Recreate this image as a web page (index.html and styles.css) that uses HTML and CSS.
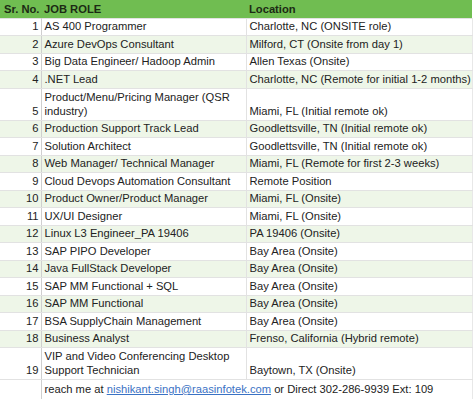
FILE: index.html
```html
<!DOCTYPE html>
<html lang="en">
<head>
  <meta charset="UTF-8" />
  <title>Open Positions</title>
  <link rel="stylesheet" href="styles.css">
</head>
<body>
  <table class="jobs">
    <colgroup>
      <col class="c-no">
      <col class="c-role">
      <col class="c-loc">
    </colgroup>
    <thead>
      <tr>
        <th class="no">Sr. No.</th>
        <th>JOB ROLE</th>
        <th>Location</th>
      </tr>
    </thead>
    <tbody>
      <tr><td class="no">1</td><td>AS 400 Programmer</td><td>Charlotte, NC (ONSITE role)</td></tr>
      <tr><td class="no">2</td><td>Azure DevOps Consultant</td><td>Milford, CT (Onsite from day 1)</td></tr>
      <tr><td class="no">3</td><td>Big Data Engineer/ Hadoop Admin</td><td>Allen Texas (Onsite)</td></tr>
      <tr><td class="no">4</td><td>.NET Lead</td><td>Charlotte, NC (Remote for initial 1-2 months)</td></tr>
      <tr class="tall"><td class="no">5</td><td>Product/Menu/Pricing Manager (QSR<br>industry)</td><td>Miami, FL (Initial remote ok)</td></tr>
      <tr><td class="no">6</td><td>Production Support Track Lead</td><td>Goodlettsville, TN (Initial remote ok)</td></tr>
      <tr><td class="no">7</td><td>Solution Architect</td><td>Goodlettsville, TN (Initial remote ok)</td></tr>
      <tr><td class="no">8</td><td>Web Manager/ Technical Manager</td><td>Miami, FL (Remote for first 2-3 weeks)</td></tr>
      <tr><td class="no">9</td><td>Cloud Devops Automation Consultant</td><td>Remote Position</td></tr>
      <tr><td class="no">10</td><td>Product Owner/Product Manager</td><td>Miami, FL (Onsite)</td></tr>
      <tr><td class="no">11</td><td>UX/UI Designer</td><td>Miami, FL (Onsite)</td></tr>
      <tr><td class="no">12</td><td>Linux L3 Engineer_PA 19406</td><td>PA 19406 (Onsite)</td></tr>
      <tr><td class="no">13</td><td>SAP PIPO Developer</td><td>Bay Area (Onsite)</td></tr>
      <tr><td class="no">14</td><td>Java FullStack Developer</td><td>Bay Area (Onsite)</td></tr>
      <tr><td class="no">15</td><td>SAP MM Functional + SQL</td><td>Bay Area (Onsite)</td></tr>
      <tr><td class="no">16</td><td>SAP MM Functional</td><td>Bay Area (Onsite)</td></tr>
      <tr><td class="no">17</td><td>BSA SupplyChain Management</td><td>Bay Area (Onsite)</td></tr>
      <tr><td class="no">18</td><td>Business Analyst</td><td>Frenso, California (Hybrid remote)</td></tr>
      <tr class="tall"><td class="no">19</td><td>VIP and Video Conferencing Desktop<br>Support Technician</td><td>Baytown, TX (Onsite)</td></tr>
      <tr class="foot">
        <td class="no"></td>
        <td colspan="2">reach me at <a href="mailto:nishikant.singh@raasinfotek.com">nishikant.singh@raasinfotek.com</a> or Direct 302-286-9939 Ext: 109</td>
      </tr>
    </tbody>
  </table>
</body>
</html>
```

FILE: styles.css
```css
* {
  margin: 0; padding: 0; box-sizing: border-box;
}
body {
  background: #fff;
  font-family: 'Liberation Sans', Arial, sans-serif;
  font-size: 11.2px;
  color: #222;
}

.jobs {
  width: 472px;
  border-collapse: collapse;
  table-layout: fixed;
  border-bottom: 1px solid #666;
}
.c-no { width: 41px; }
.c-role { width: 205px; }
.c-loc { width: 226px; }

.jobs th,
.jobs td {
  padding: 0 3px 2px;
  line-height: 14px;
  text-align: left;
  vertical-align: bottom;
  white-space: nowrap;
  overflow: visible;
}

.jobs th {
  height: 18px;
  background: #70bd51;
  color: #1c2a14;
  font-weight: 700;
  padding-bottom: 2px;
}
.jobs th.no { padding-left: 4px; }

.jobs td {
  height: 17.5px;
  border: 1px solid #e2e2e2;
}
.jobs td:first-child { border-left: none; }
.jobs td:last-child { border-right: 1px solid #e8e8e8; }
.jobs td.no {
  text-align: right;
  padding-right: 2px;
  border-right: 1px solid #cfcfcf;
}

.jobs tbody tr:nth-child(even) td {
  background: #eef6e8;
}

.jobs tr.tall td { height: 32px; }
.jobs tbody tr.foot td {
  height: 20px;
  padding-bottom: 3px;
  border-bottom: none;
  background: #fff;
}

.jobs a {
  color: #3a72c4;
  text-decoration: underline;
}
```
